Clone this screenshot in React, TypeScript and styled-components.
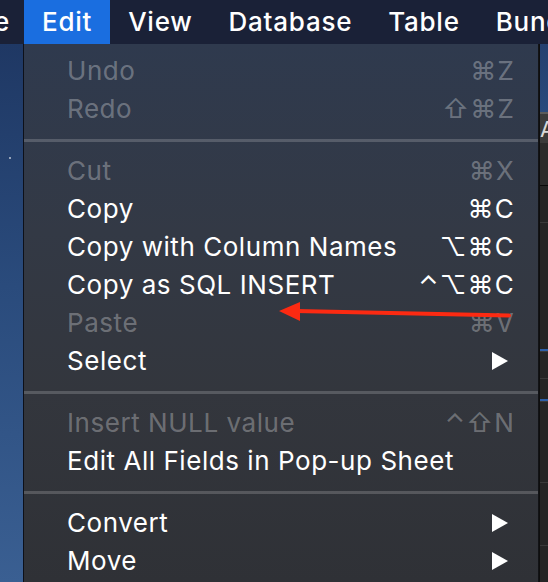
import React from 'react';
import styled, { createGlobalStyle } from 'styled-components';

const Global = createGlobalStyle`
  html, body { margin: 0; padding: 0; background: #1a2137; }
  body {
    width: 548px; height: 582px; overflow: hidden;
    font-family: Inter, "Noto Sans", "DejaVu Sans", sans-serif;
    -webkit-font-smoothing: antialiased;
  }
  #root { width: 548px; height: 582px; }
`;

const Screen = styled.div`
  position: relative;
  width: 548px;
  height: 582px;
  overflow: hidden;
  display: flex;
  flex-direction: column;
`;

const MenuBar = styled.div`
  flex: none;
  height: 44px;
  display: flex;
  align-items: stretch;
  background: #1a2137;
`;

const MenuTitle = styled.div<{ $active?: boolean }>`
  flex: none;
  display: flex;
  align-items: center;
  padding: 0 18px 1px;
  font-size: 26px;
  font-weight: 500;
  letter-spacing: 0.75px;
  color: #ffffff;
  white-space: nowrap;
  background: ${p => (p.$active ? '#1a6ee0' : 'transparent')};
`;

const ClippedTitle = styled(MenuTitle)`
  width: 24px;
  padding: 0 14px 1px 0;
  box-sizing: border-box;
  justify-content: flex-end;
  overflow: hidden;
`;

const Body = styled.div`
  flex: 1;
  min-height: 0;
  display: flex;
`;

const Desktop = styled.div`
  position: relative;
  flex: none;
  width: 23px;
  background: linear-gradient(180deg, #1f3864 0%, #2a4b7c 45%, #3a5f92 100%);
  border-right: 1px solid #0d1019;
`;

const Star = styled.span`
  position: absolute;
  left: 9px;
  top: 113px;
  width: 2px;
  height: 2px;
  border-radius: 1px;
  background: rgba(255, 255, 255, 0.7);
`;

const Menu = styled.div`
  flex: none;
  width: 515px;
  padding: 8px 0 0;
  box-sizing: border-box;
  background: linear-gradient(180deg, #2f3a4e 0%, #333945 35%, #33363d 65%, #2f3136 100%);
  border-right: 1px solid #121316;
  display: flex;
  flex-direction: column;
`;

const Item = styled.div<{ $disabled?: boolean }>`
  height: 38px;
  display: flex;
  align-items: center;
  padding: 0 23px 0 43px;
  font-size: 26px;
  line-height: 38px;
  letter-spacing: 0.55px;
  color: ${p => (p.$disabled ? 'rgba(255,255,255,0.3)' : '#ffffff')};
`;

const Label = styled.span`
  flex: 1;
  white-space: nowrap;
`;

const Shortcut = styled.span`
  font-family: Inter, "DejaVu Sans", sans-serif;
  font-size: 26px;
  letter-spacing: 1.2px;
  white-space: nowrap;
`;

const Separator = styled.div`
  height: 3px;
  margin: 11px 0 10px;
  background: rgba(255, 255, 255, 0.18);
`;

const SubArrow = styled.svg`
  width: 18px;
  height: 18px;
  margin-right: 6px;
  fill: #ffffff;
`;

const AppWindow = styled.div`
  flex: 1;
  display: flex;
  flex-direction: column;
  background: #252525;
  border-left: 1px solid #0e0e0e;
`;

const WindowBlue = styled.div`
  flex: none;
  height: 68px;
  background: linear-gradient(180deg, #24406f, #2a4a7c);
  border-bottom: 2px solid #5b5b5b;
`;

const WindowToolbar = styled.div`
  flex: none;
  height: 29px;
  background: #3b3b3b;
  color: #d8d8d8;
  font-size: 22px;
  line-height: 30px;
  overflow: hidden;
  white-space: nowrap;
`;

const WindowHeader = styled.div`
  flex: none;
  height: 42px;
  background: #2b2b2b;
  border-bottom: 1px solid #0a0a0a;
`;

const WindowRow = styled.div<{ $h: number; $mark?: boolean }>`
  flex: none;
  height: ${p => p.$h}px;
  border-bottom: 1px solid #3a3a3a;
  box-shadow: ${p => (p.$mark ? 'inset 0 -3px 0 -1px #2d5fa8' : 'none')};
`;

const Overlay = styled.svg`
  position: absolute;
  left: 0;
  top: 0;
  width: 548px;
  height: 582px;
  pointer-events: none;
`;

type Entry =
  | { sep: true }
  | { label: string; keys?: string; disabled?: boolean; sub?: boolean };

const entries: Entry[] = [
  { label: 'Undo', keys: '⌘Z', disabled: true },
  { label: 'Redo', keys: '⇧⌘Z', disabled: true },
  { sep: true },
  { label: 'Cut', keys: '⌘X', disabled: true },
  { label: 'Copy', keys: '⌘C' },
  { label: 'Copy with Column Names', keys: '⌥⌘C' },
  { label: 'Copy as SQL INSERT', keys: '⌃⌥⌘C' },
  { label: 'Paste', keys: '⌘V', disabled: true },
  { label: 'Select', sub: true },
  { sep: true },
  { label: 'Insert NULL value', keys: '⌃⇧N', disabled: true },
  { label: 'Edit All Fields in Pop-up Sheet' },
  { sep: true },
  { label: 'Convert', sub: true },
  { label: 'Move', sub: true },
];

export default function App() {
  return (
    <>
      <Global />
      <Screen>
        <MenuBar>
          <ClippedTitle>File</ClippedTitle>
          <MenuTitle $active>Edit</MenuTitle>
          <MenuTitle>View</MenuTitle>
          <MenuTitle>Database</MenuTitle>
          <MenuTitle>Table</MenuTitle>
          <MenuTitle>Bundles</MenuTitle>
        </MenuBar>
        <Body>
          <Desktop>
            <Star />
          </Desktop>
          <Menu>
            {entries.map((e, i) =>
              'sep' in e ? (
                <Separator key={i} />
              ) : (
                <Item key={i} $disabled={e.disabled}>
                  <Label>{e.label}</Label>
                  {e.keys && <Shortcut>{e.keys}</Shortcut>}
                  {e.sub && (
                    <SubArrow viewBox="0 0 18 18">
                      <polygon points="1,0 17,9 1,18" />
                    </SubArrow>
                  )}
                </Item>
              )
            )}
          </Menu>
          <AppWindow>
            <WindowBlue />
            <WindowToolbar>Ac</WindowToolbar>
            <WindowHeader />
            <WindowRow $h={36} />
            <WindowRow $h={128} $mark />
            <WindowRow $h={26} />
            <WindowRow $h={22} $mark />
            <WindowRow $h={80} />
            <WindowRow $h={62} />
          </AppWindow>
        </Body>
        <Overlay viewBox="0 0 548 582">
          <line x1="509" y1="315.5" x2="296" y2="311" stroke="#fc2a12" strokeWidth="4" strokeLinecap="round" />
          <polygon points="279,311 300,302 300,321" fill="#fc2a12" />
        </Overlay>
      </Screen>
    </>
  );
}
